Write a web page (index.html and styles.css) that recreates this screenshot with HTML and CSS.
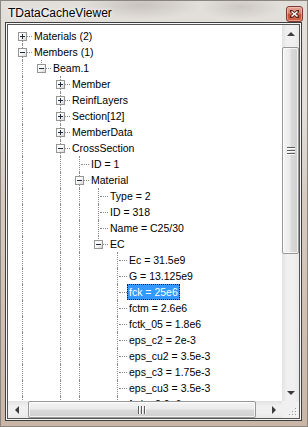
FILE: index.html
```html
<!DOCTYPE html>
<html lang="en">
<head>
    <meta charset="UTF-8">
    <title>TDataCacheViewer</title>
    <link rel="stylesheet" href="styles.css">
</head>
<body>
    <div class="window">
        <div class="titlebar">
            <span class="caption">TDataCacheViewer</span>
            <span class="close-btn">
                <svg width="9" height="8" viewBox="0 0 9 8">
                    <path d="M1 1 L8 7 M8 1 L1 7" stroke="#5a2018" stroke-width="3" stroke-linecap="square"/>
                    <path d="M1.5 1.5 L7.5 6.5 M7.5 1.5 L1.5 6.5" stroke="#fff" stroke-width="1.6"/>
                </svg>
            </span>
        </div>
        <div class="frame">
            <div class="client-edge">
                <div class="treeview">
                    <div class="tree">
                        <div class="row"><span class="g f"><span class="box plus"></span></span><span class="label">Materials (2)</span></div>
                        <div class="row"><span class="g t"><span class="box"></span></span><span class="label">Members (1)</span></div>
                        <div class="row"><span class="g v"></span><span class="g l"><span class="box"></span></span><span class="label">Beam.1</span></div>
                        <div class="row"><span class="g v"></span><span class="g"></span><span class="g t"><span class="box plus"></span></span><span class="label">Member</span></div>
                        <div class="row"><span class="g v"></span><span class="g"></span><span class="g t"><span class="box plus"></span></span><span class="label">ReinfLayers</span></div>
                        <div class="row"><span class="g v"></span><span class="g"></span><span class="g t"><span class="box plus"></span></span><span class="label">Section[12]</span></div>
                        <div class="row"><span class="g v"></span><span class="g"></span><span class="g t"><span class="box plus"></span></span><span class="label">MemberData</span></div>
                        <div class="row"><span class="g v"></span><span class="g"></span><span class="g t"><span class="box"></span></span><span class="label">CrossSection</span></div>
                        <div class="row"><span class="g v"></span><span class="g"></span><span class="g v"></span><span class="g t"></span><span class="label">ID = 1</span></div>
                        <div class="row"><span class="g v"></span><span class="g"></span><span class="g v"></span><span class="g t"><span class="box"></span></span><span class="label">Material</span></div>
                        <div class="row"><span class="g v"></span><span class="g"></span><span class="g v"></span><span class="g v"></span><span class="g t"></span><span class="label">Type = 2</span></div>
                        <div class="row"><span class="g v"></span><span class="g"></span><span class="g v"></span><span class="g v"></span><span class="g t"></span><span class="label">ID = 318</span></div>
                        <div class="row"><span class="g v"></span><span class="g"></span><span class="g v"></span><span class="g v"></span><span class="g t"></span><span class="label">Name = C25/30</span></div>
                        <div class="row"><span class="g v"></span><span class="g"></span><span class="g v"></span><span class="g v"></span><span class="g l"><span class="box"></span></span><span class="label">EC</span></div>
                        <div class="row"><span class="g v"></span><span class="g"></span><span class="g v"></span><span class="g v"></span><span class="g"></span><span class="g t"></span><span class="label">Ec = 31.5e9</span></div>
                        <div class="row"><span class="g v"></span><span class="g"></span><span class="g v"></span><span class="g v"></span><span class="g"></span><span class="g t"></span><span class="label">G = 13.125e9</span></div>
                        <div class="row"><span class="g v"></span><span class="g"></span><span class="g v"></span><span class="g v"></span><span class="g"></span><span class="g t"></span><span class="label sel">fck = 25e6</span></div>
                        <div class="row"><span class="g v"></span><span class="g"></span><span class="g v"></span><span class="g v"></span><span class="g"></span><span class="g t"></span><span class="label">fctm = 2.6e6</span></div>
                        <div class="row"><span class="g v"></span><span class="g"></span><span class="g v"></span><span class="g v"></span><span class="g"></span><span class="g t"></span><span class="label">fctk_05 = 1.8e6</span></div>
                        <div class="row"><span class="g v"></span><span class="g"></span><span class="g v"></span><span class="g v"></span><span class="g"></span><span class="g t"></span><span class="label">eps_c2 = 2e-3</span></div>
                        <div class="row"><span class="g v"></span><span class="g"></span><span class="g v"></span><span class="g v"></span><span class="g"></span><span class="g t"></span><span class="label">eps_cu2 = 3.5e-3</span></div>
                        <div class="row"><span class="g v"></span><span class="g"></span><span class="g v"></span><span class="g v"></span><span class="g"></span><span class="g t"></span><span class="label">eps_c3 = 1.75e-3</span></div>
                        <div class="row"><span class="g v"></span><span class="g"></span><span class="g v"></span><span class="g v"></span><span class="g"></span><span class="g t"></span><span class="label">eps_cu3 = 3.5e-3</span></div>
                        <div class="row"><span class="g v"></span><span class="g"></span><span class="g v"></span><span class="g v"></span><span class="g"></span><span class="g t"></span><span class="label">fcd = 2.0e6</span></div>
                    </div>

                    <div class="vscroll">
                        <div class="sb-btn"><span class="arrow up"></span></div>
                        <div class="vtrack">
                            <div class="vthumb"><span class="grip-h"></span></div>
                        </div>
                        <div class="sb-btn"><span class="arrow down"></span></div>
                    </div>

                    <div class="hscroll">
                        <div class="sb-btn"><span class="arrow left"></span></div>
                        <div class="htrack">
                            <div class="hthumb"><span class="grip-v"></span></div>
                        </div>
                        <div class="sb-btn"><span class="arrow right"></span></div>
                    </div>

                    <div class="corner">
                        <svg width="10" height="10" viewBox="0 0 10 10">
                            <rect x="7" y="1" width="1" height="1" fill="#9c9c9c"/><rect x="8" y="2" width="1" height="1" fill="#fff"/>
                            <rect x="4" y="4" width="1" height="1" fill="#9c9c9c"/><rect x="5" y="5" width="1" height="1" fill="#fff"/>
                            <rect x="7" y="4" width="1" height="1" fill="#9c9c9c"/><rect x="8" y="5" width="1" height="1" fill="#fff"/>
                            <rect x="1" y="7" width="1" height="1" fill="#9c9c9c"/><rect x="2" y="8" width="1" height="1" fill="#fff"/>
                            <rect x="4" y="7" width="1" height="1" fill="#9c9c9c"/><rect x="5" y="8" width="1" height="1" fill="#fff"/>
                            <rect x="7" y="7" width="1" height="1" fill="#9c9c9c"/><rect x="8" y="8" width="1" height="1" fill="#fff"/>
                        </svg>
                    </div>
                </div>
            </div>
        </div>
    </div>
</body>
</html>
```

FILE: styles.css
```css
:root {
    --frame-color: #e2ded9;
    --frame-dark: #c9b6a6;
    --edge-color: #3e3e3e;
    --tree-line: #8a8a8a;
    --select-color: #3399ff;
}

* {
    margin: 0;
    padding: 0;
    box-sizing: border-box;
}

body {
    width: 308px;
    height: 427px;
    overflow: hidden;
    background: #d0c4b8;
}

.window {
    width: 308px;
    height: 427px;
    display: flex;
    flex-direction: column;
    border: 1px solid #8b8580;
    background:
        radial-gradient(ellipse 60px 14px at 140px 4px, rgba(110, 100, 95, 0.22), transparent),
        radial-gradient(ellipse 40px 12px at 240px 6px, rgba(110, 100, 95, 0.18), transparent),
        linear-gradient(to bottom, var(--frame-color) 0, var(--frame-color) 110px, #d6cabf 200px, var(--frame-dark) 100%);
}

/* title bar */
.titlebar {
    height: 21px;
    flex: none;
    display: flex;
    align-items: center;
    justify-content: space-between;
    padding: 0 4px 0 7px;
}

.caption {
    font: 12px "Liberation Sans", Arial, sans-serif;
    color: #000;
    text-shadow: 0 0 6px rgba(255, 255, 255, 0.95), 0 0 3px rgba(255, 255, 255, 0.9);
    margin-top: 2px;
}

.close-btn {
    width: 17px;
    height: 16px;
    margin-top: 4px;
    display: flex;
    align-items: center;
    justify-content: center;
    border: 1px solid #7d3b31;
    border-radius: 3px;
    background: linear-gradient(to bottom, #e8a898 0, #d77e6a 45%, #c44a30 55%, #d26a50 100%);
    box-shadow: inset 0 0 0 1px rgba(255, 220, 210, 0.45);
}

/* frame + client edges */
.frame {
    flex: 1;
    min-height: 0;
    display: flex;
    padding: 0 5px 5px 4px;
}

.client-edge {
    flex: 1;
    min-height: 0;
    min-width: 0;
    display: flex;
    border: 1px solid var(--edge-color);
    padding: 1px;
    background: #f6f6f6;
}

.treeview {
    flex: 1;
    min-height: 0;
    min-width: 0;
    display: grid;
    grid-template-columns: minmax(0, 1fr) 17px;
    grid-template-rows: minmax(0, 1fr) 17px;
    border: 1px solid #555;
    background: #fff;
    overflow: hidden;
}

/* tree */
.tree {
    padding: 3px 0 0 5px;
    overflow: hidden;
    font: 10.5px "Liberation Sans", Arial, sans-serif;
    color: #000;
    background: #fff;
}

.row {
    display: flex;
    height: 16px;
    line-height: 16px;
    white-space: nowrap;
}

.g {
    flex: none;
    width: 19px;
    height: 16px;
    position: relative;
}

.g.v::before,
.g.t::before,
.g.l::before,
.g.f::before {
    content: '';
    position: absolute;
    left: 9px;
    border-left: 1px dotted var(--tree-line);
}

.g.v::before,
.g.t::before {
    top: 0;
    height: 16px;
}

.g.l::before {
    top: 0;
    height: 9px;
}

.g.f::before {
    top: 8px;
    height: 8px;
}

.g.t::after,
.g.l::after,
.g.f::after {
    content: '';
    position: absolute;
    left: 11px;
    top: 8px;
    width: 8px;
    border-top: 1px dotted var(--tree-line);
}

.box {
    position: absolute;
    left: 5px;
    top: 4px;
    width: 9px;
    height: 9px;
    z-index: 1;
    border: 1px solid #959595;
    background: linear-gradient(135deg, #ffffff 35%, #d8d8d8 100%);
}

.box::before {
    content: '';
    position: absolute;
    left: 1px;
    top: 3px;
    width: 5px;
    height: 1px;
    background: #1e2a40;
}

.box.plus::after {
    content: '';
    position: absolute;
    left: 3px;
    top: 1px;
    width: 1px;
    height: 5px;
    background: #1e2a40;
}

.label {
    padding: 0 2px;
    height: 16px;
}

.label.sel {
    background: var(--select-color);
    color: #fff;
    outline: 1px dotted #1a1a1a;
    outline-offset: -1px;
}

/* scrollbars */
.vscroll {
    display: flex;
    flex-direction: column;
    min-height: 0;
    background: linear-gradient(to right, #e3e3e3, #f0f0f0 30%, #f0f0f0 70%, #e8e8e8);
}

.hscroll {
    display: flex;
    min-width: 0;
    background: linear-gradient(to bottom, #e3e3e3, #f0f0f0 30%, #f0f0f0 70%, #e8e8e8);
}

.sb-btn {
    flex: none;
    width: 17px;
    height: 17px;
    display: flex;
    align-items: center;
    justify-content: center;
}

.arrow {
    width: 0;
    height: 0;
}

.arrow.up {
    border-left: 4px solid transparent;
    border-right: 4px solid transparent;
    border-bottom: 4px solid #3c3c3c;
}

.arrow.down {
    border-left: 4px solid transparent;
    border-right: 4px solid transparent;
    border-top: 4px solid #3c3c3c;
}

.arrow.left {
    border-top: 4px solid transparent;
    border-bottom: 4px solid transparent;
    border-right: 4px solid #3c3c3c;
}

.arrow.right {
    border-top: 4px solid transparent;
    border-bottom: 4px solid transparent;
    border-left: 4px solid #3c3c3c;
}

.vtrack {
    flex: 1;
    min-height: 0;
    padding: 5px 0 0 0;
}

.vthumb {
    height: 207px;
    display: flex;
    align-items: center;
    justify-content: center;
    border: 1px solid #979797;
    border-radius: 2px;
    background: linear-gradient(to right, #f4f4f4 0, #ebebeb 45%, #dadada 55%, #cfcfcf 100%);
    box-shadow: inset 0 0 0 1px rgba(255, 255, 255, 0.7);
}

.grip-h {
    width: 8px;
    height: 8px;
    background:
        linear-gradient(#5c5c5c, #5c5c5c) 0 0 / 8px 1px no-repeat,
        linear-gradient(#5c5c5c, #5c5c5c) 0 3px / 8px 1px no-repeat,
        linear-gradient(#5c5c5c, #5c5c5c) 0 6px / 8px 1px no-repeat,
        linear-gradient(#fff, #fff) 0 1px / 8px 1px no-repeat,
        linear-gradient(#fff, #fff) 0 4px / 8px 1px no-repeat,
        linear-gradient(#fff, #fff) 0 7px / 8px 1px no-repeat;
}

.htrack {
    flex: 1;
    min-width: 0;
    padding: 0 9px 0 3px;
}

.hthumb {
    height: 17px;
    display: flex;
    align-items: center;
    justify-content: center;
    border: 1px solid #979797;
    border-radius: 2px;
    background: linear-gradient(to bottom, #f4f4f4 0, #ebebeb 45%, #dadada 55%, #cfcfcf 100%);
    box-shadow: inset 0 0 0 1px rgba(255, 255, 255, 0.7);
}

.grip-v {
    width: 8px;
    height: 8px;
    background:
        linear-gradient(#5c5c5c, #5c5c5c) 0 0 / 1px 8px no-repeat,
        linear-gradient(#5c5c5c, #5c5c5c) 3px 0 / 1px 8px no-repeat,
        linear-gradient(#5c5c5c, #5c5c5c) 6px 0 / 1px 8px no-repeat,
        linear-gradient(#fff, #fff) 1px 0 / 1px 8px no-repeat,
        linear-gradient(#fff, #fff) 4px 0 / 1px 8px no-repeat,
        linear-gradient(#fff, #fff) 7px 0 / 1px 8px no-repeat;
}

.corner {
    display: flex;
    align-items: flex-end;
    justify-content: flex-end;
    padding: 0 1px 1px 0;
    background: #f0f0f0;
}
```
